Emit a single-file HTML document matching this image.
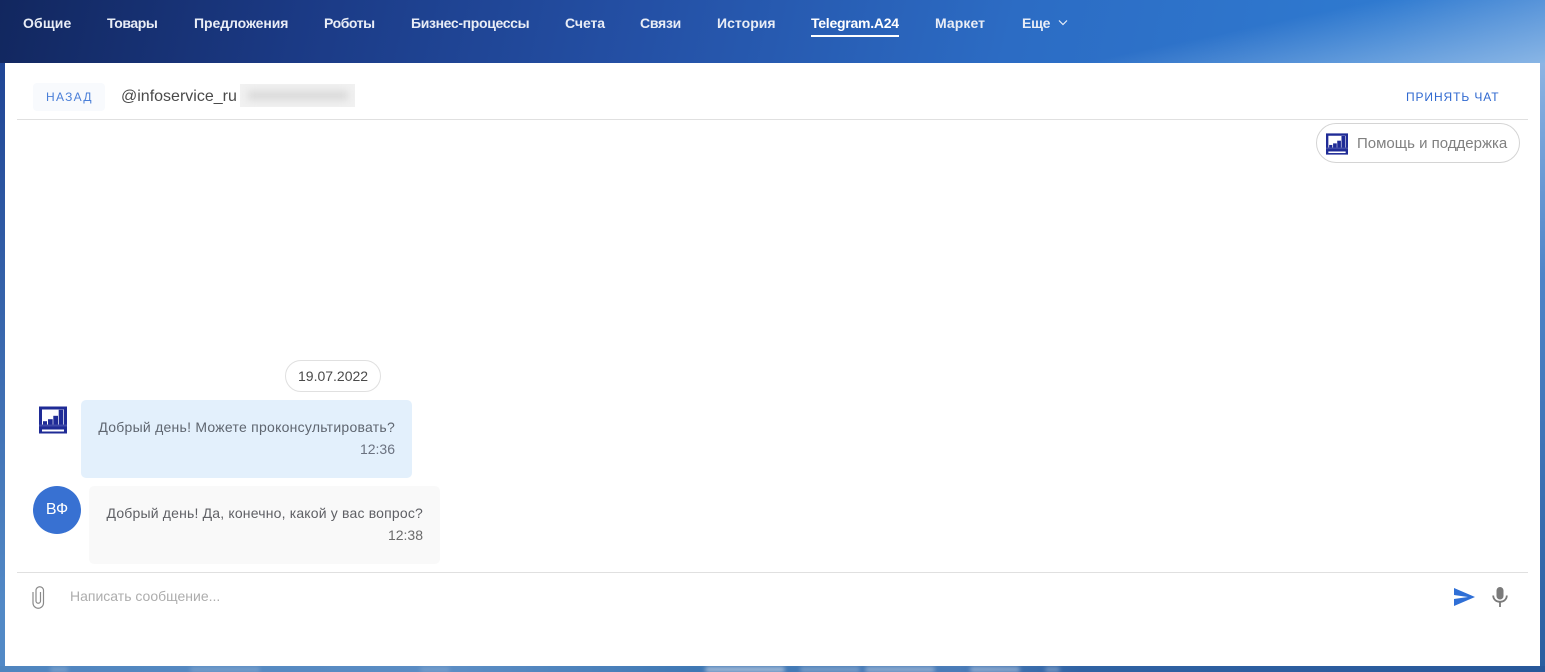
<!DOCTYPE html>
<html lang="ru"><head><meta charset="utf-8"><title>Telegram.A24</title>
<style>
html,body{margin:0;padding:0;width:1545px;height:672px;overflow:hidden;font-family:"Liberation Sans",sans-serif}
#bg{position:absolute;left:0;top:0;width:1545px;height:672px;background:linear-gradient(103deg,#12275f 0,#1b3a85 18%,#2450a5 38%,#2c6cc4 60%,#2f7ad0 82%,#4a8ad6 100%)}
#glow{position:absolute;left:1000px;top:0;width:545px;height:63px;background:linear-gradient(168deg,rgba(150,190,232,0) 45%,rgba(150,190,232,.85) 100%)}
#side-l{position:absolute;left:0;top:63px;width:5px;height:603px;background:linear-gradient(180deg,#1f4595,#5289c6 90%)}
#side-r{position:absolute;left:1540px;top:63px;width:5px;height:603px;background:linear-gradient(180deg,#8db4e3,#4f85c8 35%,#2b5fa0 100%)}
#bot{position:absolute;left:0;top:666px;width:1545px;height:6px;background:linear-gradient(90deg,#4f85bf 0,#5b8dc4 30%,#3f78b4 45%,#4a7cb8 62%,#2f62a3 70%,#28589a 100%)}
.c{position:absolute;top:667px;height:5px;background:#b4c6de;border-radius:3px;filter:blur(2px)}
.n{position:absolute;top:15px;color:#e9edf6;font-size:14px;line-height:16px;font-weight:bold;white-space:nowrap}
#ul{position:absolute;left:811px;top:35px;width:88px;height:2px;background:#fff}
#panel{position:absolute;left:5px;top:63px;width:1535px;height:603px;background:#fff}
.t{position:absolute;white-space:nowrap}
.hr{position:absolute;left:17px;width:1511px;height:1px;background:#e0e0e0}
</style></head><body>
<div id="bg"></div><div id="glow"></div><div id="side-l"></div><div id="side-r"></div><div id="bot"></div>
<div class="c" style="left:50px;width:18px;opacity:.4"></div>
<div class="c" style="left:190px;width:70px;opacity:.35"></div>
<div class="c" style="left:420px;width:30px;opacity:.3"></div>
<div class="c" style="left:705px;width:80px;opacity:.9"></div>
<div class="c" style="left:800px;width:60px;opacity:.5"></div>
<div class="c" style="left:865px;width:70px;opacity:.7"></div>
<div class="c" style="left:970px;width:50px;opacity:.7"></div>
<div class="c" style="left:1045px;width:15px;opacity:.5"></div>
<span class="n" style="left:23px;letter-spacing:.15px">Общие</span>
<span class="n" style="left:107px;letter-spacing:-.42px">Товары</span>
<span class="n" style="left:194px;letter-spacing:-.07px">Предложения</span>
<span class="n" style="left:324px;letter-spacing:-.42px">Роботы</span>
<span class="n" style="left:411px;letter-spacing:-.35px">Бизнес-процессы</span>
<span class="n" style="left:565px;letter-spacing:-.05px">Счета</span>
<span class="n" style="left:640px;letter-spacing:-.25px">Связи</span>
<span class="n" style="left:717px;letter-spacing:.03px">История</span>
<span class="n" style="left:811px;color:#fff;letter-spacing:-.25px">Telegram.A24</span>
<span class="n" style="left:935px;letter-spacing:.08px">Маркет</span>
<span class="n" style="left:1022px;letter-spacing:-.25px">Еще</span>
<svg style="position:absolute;left:1058px;top:19px" width="10" height="8" viewBox="0 0 10 8"><path d="M1 1.5L5 5.5L9 1.5" fill="none" stroke="#e8eef8" stroke-width="1.2"/></svg>
<div id="ul"></div>
<div id="panel"></div>
<div style="position:absolute;left:33px;top:83px;width:72px;height:28px;background:#f8fafd;border-radius:4px"></div>
<span class="t" style="left:46px;top:90px;font-size:12px;line-height:14px;color:#4a7fd8;letter-spacing:1.3px">НАЗАД</span>
<span class="t" style="left:121px;top:88px;font-size:16px;line-height:18px;color:#4a4a4a">@infoservice_ru</span>
<div style="position:absolute;left:240px;top:84px;width:115px;height:23px;background:#f1f1f1;overflow:hidden"><div style="position:absolute;left:8px;top:7px;width:100px;height:9px;background:#d8d8d8;filter:blur(4px)"></div></div>
<span class="t" style="left:1406px;top:90px;font-size:12px;line-height:14px;color:#3069d0;letter-spacing:.9px">ПРИНЯТЬ ЧАТ</span>
<div class="hr" style="top:119px"></div>
<div style="position:absolute;left:1316px;top:123px;width:202px;height:38px;border:1px solid #d4d4d4;border-radius:20px;background:#fff"></div>
<svg style="position:absolute;left:1326px;top:133px" width="22" height="22" viewBox="0 0 28 27"><rect width="28" height="27" fill="#1f2b96"/><rect x="3" y="3" width="22" height="15" fill="#fff"/><rect x="4" y="14.7" width="4" height="3.3" fill="#1f2b96"/><rect x="9" y="12.7" width="4.7" height="5.3" fill="#1f2b96"/><rect x="14.3" y="9.3" width="4.7" height="8.7" fill="#1f2b96"/><rect x="19.7" y="3.3" width="4.6" height="14.7" fill="#1f2b96"/><rect x="0" y="18" width="28" height="2" fill="#3f4aa8"/><rect x="3" y="23" width="22" height="2" fill="#fff"/></svg>
<span class="t" style="left:1357px;top:135px;font-size:15px;line-height:18px;color:#808080">Помощь и поддержка</span>
<div style="position:absolute;left:285px;top:360px;width:94px;height:30px;border:1px solid #e0e0e0;border-radius:16px;background:#fff"></div>
<span class="t" style="left:298px;top:368px;font-size:14px;line-height:16px;color:#4a4a4a">19.07.2022</span>
<svg style="position:absolute;left:39px;top:406px" width="28" height="28" viewBox="0 0 28 27"><rect width="28" height="27" fill="#1f2b96"/><rect x="3" y="3" width="22" height="15" fill="#fff"/><rect x="4" y="14.7" width="4" height="3.3" fill="#1f2b96"/><rect x="9" y="12.7" width="4.7" height="5.3" fill="#1f2b96"/><rect x="14.3" y="9.3" width="4.7" height="8.7" fill="#1f2b96"/><rect x="19.7" y="3.3" width="4.6" height="14.7" fill="#1f2b96"/><rect x="0" y="18" width="28" height="2" fill="#3f4aa8"/><rect x="3" y="23" width="22" height="2" fill="#fff"/></svg>
<div style="position:absolute;left:81px;top:400px;width:331px;height:78px;background:#e3f0fc;border-radius:5px"></div>
<span class="t" style="right:1150px;top:419px;font-size:14px;line-height:16px;color:#5f6670;letter-spacing:.25px">Добрый день! Можете проконсультировать?</span>
<span class="t" style="right:1150px;top:441px;font-size:14px;line-height:16px;color:#6b7280">12:36</span>
<div style="position:absolute;left:33px;top:486px;width:48px;height:48px;background:#3871d2;border-radius:50%;color:#fff;font-size:16px;line-height:48px;text-align:center">ВФ</div>
<div style="position:absolute;left:89px;top:486px;width:351px;height:78px;background:#f9f9f9;border-radius:5px"></div>
<span class="t" style="right:1122px;top:505px;font-size:14px;line-height:16px;color:#5f6065;letter-spacing:.18px">Добрый день! Да, конечно, какой у вас вопрос?</span>
<span class="t" style="right:1122px;top:527px;font-size:14px;line-height:16px;color:#6b6b6b">12:38</span>
<div class="hr" style="top:572px"></div>
<svg style="position:absolute;left:30px;top:585px" width="16" height="24" viewBox="0 0 16 24"><path d="M3 7V18A5.25 5.25 0 0 0 13.5 18V5.5A3.75 3.75 0 0 0 6 5.5V16A2.25 2.25 0 0 0 10.5 16V7" fill="none" stroke="#8a8a8a" stroke-width="1.2"/></svg>
<span class="t" style="left:70px;top:588px;font-size:14px;line-height:16px;color:#adadad">Написать сообщение...</span>
<svg style="position:absolute;left:1454px;top:588px" width="21" height="18" viewBox="0 0 21 18"><path d="M0 0L21 9L0 18V11L14 9L0 7Z" fill="#2f6fd6"/></svg>
<svg style="position:absolute;left:1492px;top:587px" width="16" height="20" viewBox="0 0 16 20"><rect x="4.5" y="0" width="7" height="12.5" rx="3.5" fill="#7a7a7a"/><path d="M1.2 8.5C1.2 12.5 4.5 14.8 8 14.8C11.5 14.8 14.8 12.5 14.8 8.5" fill="none" stroke="#7a7a7a" stroke-width="1.8"/><rect x="7.1" y="14" width="1.8" height="6" fill="#7a7a7a"/></svg>
</body></html>
